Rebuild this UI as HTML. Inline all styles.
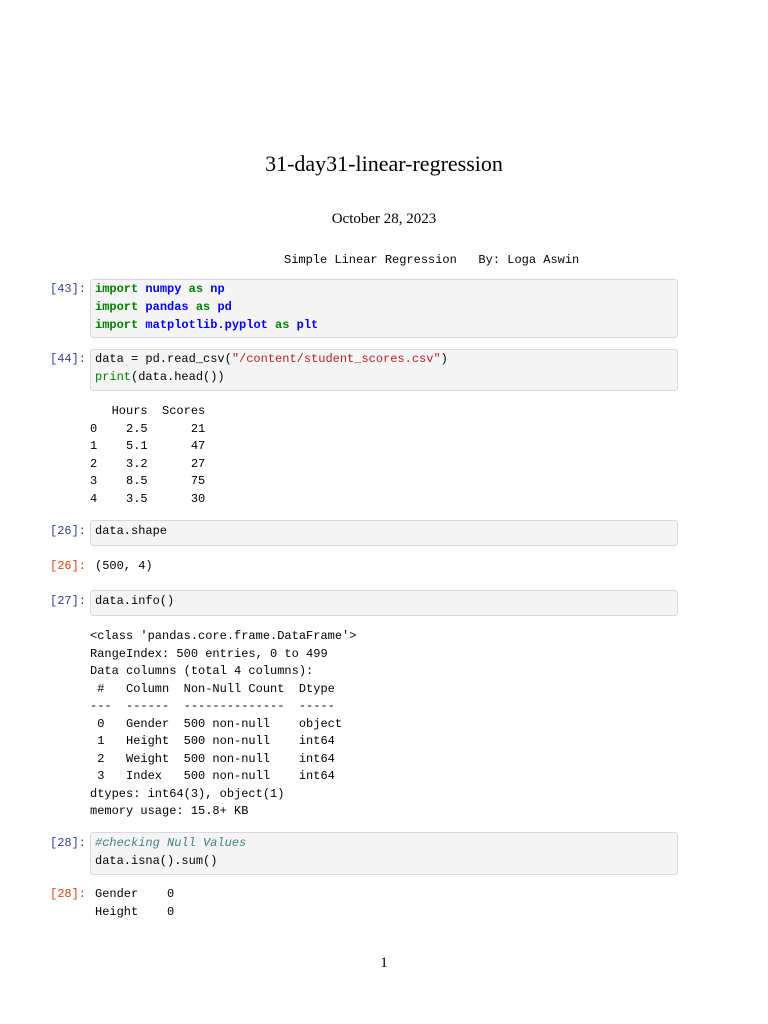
<!DOCTYPE html>
<html><head><style>
body{margin:0;background:#fff;width:768px;height:1024px;position:relative;overflow:hidden}
.m{position:absolute;font-family:"Liberation Mono",monospace;font-size:12px;line-height:18px;white-space:pre;color:#000}
.s{position:absolute;font-family:"Liberation Serif",serif;color:#000;white-space:pre}
.box{position:absolute;left:90px;width:586px;background:#f5f5f5;border:1px solid #d8d8d8;border-radius:3px}
.in{color:#303f9f}.out{color:#d84315}
.k{color:#008000;font-weight:bold}.n{color:#0000ff;font-weight:bold}.st{color:#ba2121}.b{color:#008000}
.c{color:#408080;font-style:italic}
</style></head><body>
<div class="s" style="left:0;width:768px;text-align:center;top:151px;font-size:22px">31-day31-linear-regression</div>
<div class="s" style="left:0;width:768px;text-align:center;top:211px;font-size:15px">October 28, 2023</div>
<div class="m" style="left:284px;top:251px">Simple Linear Regression   By: Loga Aswin</div>

<div class="box" style="top:279px;height:57px"></div>
<div class="m in" style="left:50px;top:280px">[43]:</div>
<div class="m" style="left:95px;top:280px"><span class="k">import</span> <span class="n">numpy</span> <span class="k">as</span> <span class="n">np</span>
<span class="k">import</span> <span class="n">pandas</span> <span class="k">as</span> <span class="n">pd</span>
<span class="k">import</span> <span class="n">matplotlib.pyplot</span> <span class="k">as</span> <span class="n">plt</span></div>

<div class="box" style="top:349px;height:40px"></div>
<div class="m in" style="left:50px;top:350px">[44]:</div>
<div class="m" style="left:95px;top:350px">data = pd.read_csv(<span class="st">"/content/student_scores.csv"</span>)
<span class="b">print</span>(data.head())</div>

<div class="m" style="left:90px;top:403px;line-height:17.6px">   Hours  Scores
0    2.5      21
1    5.1      47
2    3.2      27
3    8.5      75
4    3.5      30</div>

<div class="box" style="top:520px;height:24px"></div>
<div class="m in" style="left:50px;top:522px">[26]:</div>
<div class="m" style="left:95px;top:522px">data.shape</div>
<div class="m out" style="left:50px;top:557px">[26]:</div>
<div class="m" style="left:95px;top:557px">(500, 4)</div>

<div class="box" style="top:590px;height:24px"></div>
<div class="m in" style="left:50px;top:592px">[27]:</div>
<div class="m" style="left:95px;top:592px">data.info()</div>

<div class="m" style="left:90px;top:628px;line-height:17.5px">&lt;class 'pandas.core.frame.DataFrame'&gt;
RangeIndex: 500 entries, 0 to 499
Data columns (total 4 columns):
 #   Column  Non-Null Count  Dtype
---  ------  --------------  -----
 0   Gender  500 non-null    object
 1   Height  500 non-null    int64
 2   Weight  500 non-null    int64
 3   Index   500 non-null    int64
dtypes: int64(3), object(1)
memory usage: 15.8+ KB</div>

<div class="box" style="top:832px;height:41px"></div>
<div class="m in" style="left:50px;top:834px">[28]:</div>
<div class="m" style="left:95px;top:834px"><span class="c">#checking Null Values</span>
data.isna().sum()</div>
<div class="m out" style="left:50px;top:885px">[28]:</div>
<div class="m" style="left:95px;top:885px">Gender    0
Height    0</div>

<div class="s" style="left:0;width:768px;text-align:center;top:955px;font-size:15px">1</div>
</body></html>
